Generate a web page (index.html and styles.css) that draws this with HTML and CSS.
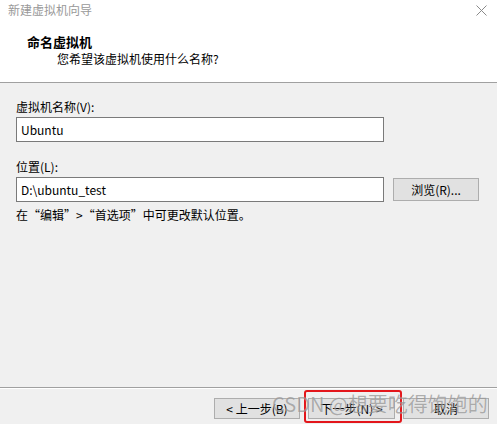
FILE: index.html
```html
<!DOCTYPE html>
<html lang="zh-CN">
<head>
<meta charset="utf-8">
<title>新建虚拟机向导</title>
<link rel="stylesheet" href="styles.css">
</head>
<body>
<div class="window">
  <div class="header">
    <div class="titlebar">
      <span class="title">新建虚拟机向导</span>
      <svg class="close" width="11" height="11" viewBox="0 0 11 11"><path d="M0.5 0.5 L10.5 10.5 M10.5 0.5 L0.5 10.5" stroke="#8a8a8a" stroke-width="1" fill="none"/></svg>
    </div>
    <div class="heading">命名虚拟机</div>
    <div class="subtitle">您希望该虚拟机使用什么名称?</div>
  </div>
  <div class="content">
    <div class="label">虚拟机名称(V):</div>
    <div class="row">
      <div class="input">Ubuntu</div>
    </div>
    <div class="label second">位置(L):</div>
    <div class="row">
      <div class="input">D:\ubuntu_test</div>
      <div class="btn browse">浏览(R)...</div>
    </div>
    <div class="hint">在“编辑”&gt;“首选项”中可更改默认位置。</div>
  </div>
  <div class="footer">
    <div class="footer-inner">
      <div class="btn">&lt; 上一步(B)</div>
      <div class="next-wrap">
        <div class="btn">下一步(N) &gt;</div>
        <div class="highlight"></div>
      </div>
      <div class="btn">取消</div>
    </div>
  </div>
  <div class="watermark">CSDN @想要吃得饱饱的</div>
</div>
</body>
</html>
```
FILE: styles.css
```css
html, body {
  margin: 0;
  padding: 0;
}
body {
  width: 497px;
  height: 424px;
  overflow: hidden;
  font-family: "Noto Sans CJK SC", "Noto Sans", sans-serif;
  font-size: 12px;
  color: #000;
  background: #f0f0f0;
}
.window {
  position: relative;
  width: 497px;
  height: 424px;
  display: flex;
  flex-direction: column;
}
.header {
  background: #fff;
  height: 82px;
  border-bottom: 1px solid #a0a0a0;
  flex: none;
}
.titlebar {
  height: 20px;
  display: flex;
  align-items: center;
  justify-content: space-between;
  padding: 0 10px 0 8px;
}
.title {
  color: #999;
  line-height: 20px;
}
.close {
  display: block;
}
.heading {
  margin-top: 14px;
  padding-left: 27px;
  font-weight: bold;
  font-size: 13px;
  line-height: 16px;
}
.subtitle {
  margin-top: 1px;
  padding-left: 57px;
  line-height: 16px;
}
.content {
  flex: 1;
  padding: 16px 0 0 16px;
}
.label {
  line-height: 16px;
  margin-bottom: 2px;
}
.label.second {
  margin-top: 17px;
}
.row {
  display: flex;
  align-items: center;
  gap: 9px;
}
.input {
  box-sizing: border-box;
  width: 368px;
  height: 25px;
  background: #fff;
  border: 1px solid #7a7a7a;
  padding-left: 4px;
  line-height: 23px;
}
.btn {
  box-sizing: border-box;
  width: 86px;
  height: 21px;
  background: #e1e1e1;
  border: 1px solid #adadad;
  text-align: center;
  line-height: 19px;
}
.browse {
  height: 23px;
  line-height: 21px;
}
.hint {
  margin-top: 5px;
  line-height: 16px;
}
.footer {
  flex: none;
  height: 37px;
  box-sizing: border-box;
  border-top: 1px solid #a0a0a0;
}
.footer-inner {
  border-top: 1px solid #fff;
  display: flex;
  justify-content: flex-end;
  gap: 8px;
  padding: 9px 8px 0 0;
}
.next-wrap {
  position: relative;
}
.next-wrap .btn {
  width: 87px;
}
.highlight {
  position: absolute;
  left: -4px;
  top: -8px;
  right: -7px;
  bottom: -4px;
  border: 2px solid #e3161b;
  border-radius: 3px;
}
.watermark {
  position: absolute;
  left: 272px;
  top: 390px;
  font-size: 20px;
  line-height: 27px;
  white-space: nowrap;
  color: rgba(100, 100, 100, 0.5);
  text-shadow: 0 0 1px rgba(255, 255, 255, 0.6);
}
```
